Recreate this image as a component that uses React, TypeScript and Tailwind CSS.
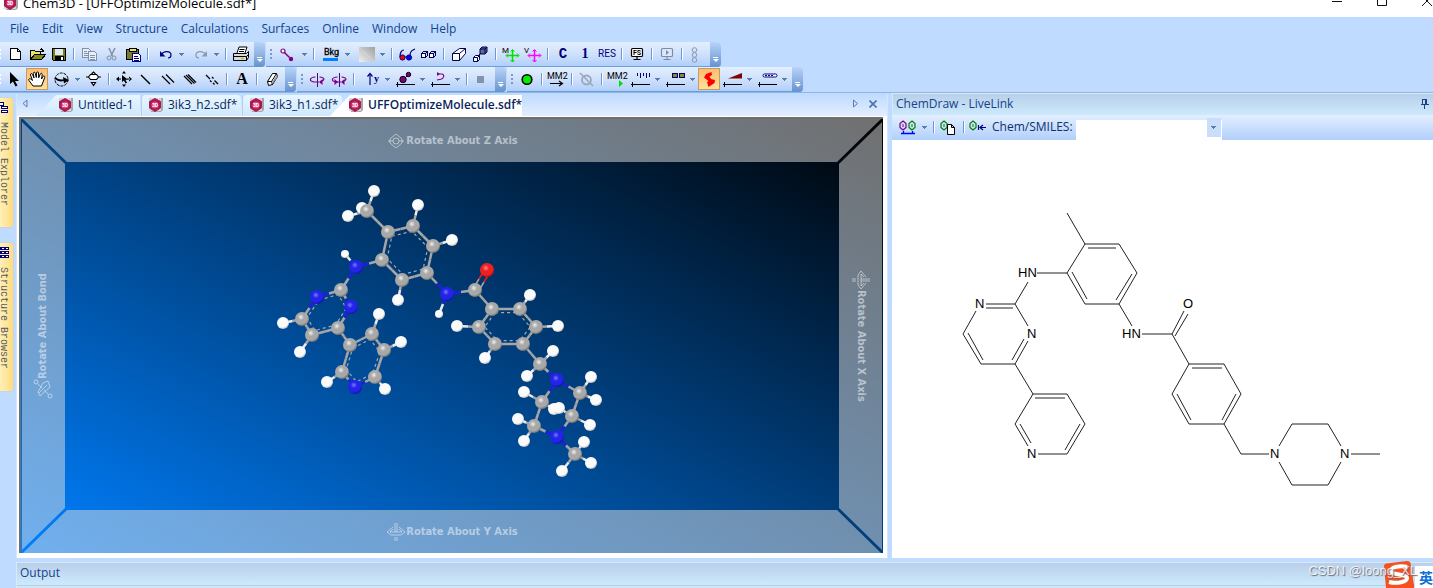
import React from 'react';
import clsx from 'clsx';

/* ---------- toolbar primitives ---------- */

interface IconProps {
  children: React.ReactNode;
  crisp?: boolean;
}

const Icon: React.FC<IconProps> = ({ children, crisp = false }) => (
  <svg width="22" height="22" viewBox="0 0 22 22" fill="none" shapeRendering={crisp ? 'crispEdges' : 'auto'} className="shrink-0">
    {children}
  </svg>
);

interface ToolProps {
  label: string;
  active?: boolean;
  children: React.ReactNode;
}

const Tool: React.FC<ToolProps> = ({ label, active = false, children }) => (
  <button
    aria-label={label}
    aria-pressed={active}
    className={clsx(
      'flex h-[22px] w-[22px] shrink-0 items-center justify-center',
      active && 'bg-gradient-to-b from-[#fdbb6c] to-[#ffe29a] outline outline-1 -outline-offset-1 outline-[#c29b6b]'
    )}
  >
    {children}
  </button>
);

const Arrow = () => (
  <svg width="5" height="3" viewBox="0 0 5 3" shapeRendering="crispEdges">
    <path d="M0 0h5v1h-1v1h-1v1h-1v-1h-1v-1h-1z" fill="#567db0" />
  </svg>
);

const SplitTool: React.FC<ToolProps> = ({ label, children }) => (
  <div className="flex h-[22px] w-[35px] shrink-0">
    <button aria-label={label} className="flex w-[23px] items-center justify-center">
      {children}
    </button>
    <button aria-label={`${label} options`} className="flex w-3 items-center justify-center">
      <Arrow />
    </button>
  </div>
);

const Sep = () => (
  <div className="flex w-2 shrink-0 justify-center">
    <div className="h-3 w-0.5 border-l border-r border-l-[#6a98d0] border-r-white" />
  </div>
);

const Grip = ({ clipped = false }: { clipped?: boolean }) => (
  <div className={clsx('flex shrink-0 flex-col gap-0.5', clipped ? 'w-1' : 'w-[9px] pl-1')}>
    {[0, 1, 2].map((i) => (
      <div key={i} className={clsx('h-0.5', clipped ? 'w-px bg-white' : 'w-0.5 bg-[#6f9dd9]')} />
    ))}
  </div>
);

const Bar: React.FC<{ label: string; clipped?: boolean; children: React.ReactNode }> = ({ label, clipped, children }) => (
  <div
    role="toolbar"
    aria-label={label}
    className="mr-px flex h-6 items-center rounded-r bg-gradient-to-b from-[#e3efff] via-[#cfe1fb] to-[#b1cffb] shadow-[0_1px_0_#6f9dd9]"
  >
    <Grip clipped={clipped} />
    {children}
    <button
      aria-label={`${label} overflow`}
      className="ml-0.5 flex h-[25px] w-[11px] shrink-0 flex-col items-center justify-end gap-px rounded-r bg-gradient-to-b from-[#b8d3f8] to-[#6593cf] pb-1"
    >
      <span className="h-px w-[5px] bg-white" />
      <svg width="6" height="4" viewBox="0 0 6 4">
        <path d="M0 0h6L3 3z" fill="#fff" />
      </svg>
    </button>
  </div>
);

/* ---------- icons ---------- */

const NewIcon = () => (
  <Icon crisp>
    <path d="M6.500 5.500h7l3 3v8h-10z" fill="#fff" stroke="#000" />
    <path d="M13.500 5.500v3h3" stroke="#000" />
  </Icon>
);

const OpenIcon = () => (
  <Icon crisp>
    <path d="M4.500 16.500v-9h4l1 1h5v3" fill="#e8e46a" stroke="#000" />
    <path d="M4.500 16.500l4-5h11l-4 5z" fill="#8a8a1a" stroke="#000" />
    <path d="M12 6h3v-1h1v1h1v1h1v2h-3v-1h1v-1z" fill="#000" />
  </Icon>
);

const SaveIcon = () => (
  <Icon crisp>
    <path d="M4.500 5.500h13v12h-12l-1-1z" fill="#7c7c12" stroke="#000" />
    <path d="M7 6h8v6H7z" fill="#dfeaf8" />
    <path d="M7 13h9v4H7z" fill="#000" />
    <path d="M13 14h2v3h-2z" fill="#fff" />
  </Icon>
);

const CopyIcon = () => (
  <Icon crisp>
    <path d="M4.500 5.500h6l2 2v7h-8z" fill="#e6effc" stroke="#8290a8" />
    <path d="M10.500 8.500h6l2 2v7h-8z" fill="#e6effc" stroke="#8290a8" />
    <path d="M6 8h3M6 10h4M6 12h4M12 12h5M12 14h5M12 16h5" stroke="#8290a8" />
  </Icon>
);

const CutIcon = () => (
  <Icon>
    <path d="M9 5l3.500 8M15 5l-4 8" stroke="#8290a8" strokeWidth="1.500" />
    <circle cx="9" cy="15" r="2" stroke="#8290a8" />
    <circle cx="14" cy="15" r="2" stroke="#8290a8" />
  </Icon>
);

const PasteIcon = () => (
  <Icon crisp>
    <path d="M4.500 6.500h12v10h-12z" fill="#7c7c3a" stroke="#000" />
    <path d="M7 5h7v3H7z" fill="#e8e46a" stroke="#000" />
    <path d="M10.500 10.500h6l2 2v6h-8z" fill="#fff" stroke="#000080" />
    <path d="M12 13h4M12 15h5M12 17h5" stroke="#000080" />
  </Icon>
);

const UndoIcon = () => (
  <Icon>
    <path d="M8 12c3-5 10-4 10 0 0 2-1 3-3 3" stroke="#000080" strokeWidth="1.200" />
    <path d="M7 8v5.500h5.500z" fill="#000080" />
  </Icon>
);

const RedoIcon = () => (
  <Icon>
    <path d="M18 12c-3-5-10-4-10 0 0 2 1 3 3 3" stroke="#8a99b3" strokeWidth="1.200" />
    <path d="M19 8v5.500h-5.500z" fill="#8a99b3" />
  </Icon>
);

const PrintIcon = () => (
  <Icon>
    <path d="M7 10l2-6h8l-2 6" fill="#fff" stroke="#000" />
    <path d="M9.500 6.500h5M9 8.500h5" stroke="#000" />
    <path d="M3.500 10.500h13l2-2v6l-2 3h-13z" fill="#d8d8d8" stroke="#000" />
    <path d="M3.500 13.500h13l2-2M16.500 13.500v4" stroke="#000" />
    <path d="M11 15.500h3" stroke="#c8c800" strokeWidth="1.500" />
  </Icon>
);

const BondToolIcon = () => (
  <Icon>
    <circle cx="7" cy="8" r="2" fill="#fff" stroke="#800080" strokeWidth="1.200" />
    <path d="M8.500 9.500l5 5" stroke="#800080" strokeWidth="1.500" />
    <circle cx="15" cy="16" r="2.200" fill="#800080" />
  </Icon>
);

const BackgroundIcon = () => (
  <Icon>
    <text x="5" y="12" fontSize="9" fontFamily="Roboto, sans-serif" fill="#000" stroke="#000" strokeWidth="0.300">Bkg</text>
    <path d="M4 15h15v3H4z" fill="#0080ff" />
  </Icon>
);

const FadeIcon = () => (
  <Icon crisp>
    <defs>
      <linearGradient id="fade" x1="1" y1="0" x2="0" y2="1">
        <stop offset="0" stopColor="#a0a0a0" />
        <stop offset="1" stopColor="#f0f0f0" />
      </linearGradient>
    </defs>
    <path d="M5 4h16v15H5z" fill="url(#fade)" />
    <path d="M5 4l16 15" stroke="#ccd3dd" />
  </Icon>
);

const GlassesIcon = () => (
  <Icon>
    <path d="M4 14C4 9 6 7 8 7M14 13c0-3 1-5 3-6l2-1" stroke="#000080" strokeWidth="1.200" />
    <path d="M8 14h4" stroke="#000080" />
    <circle cx="6.500" cy="14.500" r="2.600" fill="#f00" stroke="#000080" />
    <circle cx="13" cy="14.500" r="2.600" fill="#00f" stroke="#000080" />
  </Icon>
);

const StereoIcon = () => (
  <Icon crisp>
    {[3, 11].map((x) => (
      <g key={x} stroke="#000050">
        <path d={`M${x + 0.5} 10.500h4v4h-4z`} fill="#fff" />
        <path d={`M${x + 0.5} 10.500l2-2h4v4l-2 2M${x + 4.5} 10.500l2-2`} />
      </g>
    ))}
  </Icon>
);

const PerspectiveIcon = () => (
  <Icon>
    <path d="M4.500 10.500l7-5h6v5l-6 7h-7z" fill="#fff" stroke="#000050" />
    <path d="M4.500 10.500h7l6-5M11.500 10.500v7" stroke="#000050" />
  </Icon>
);

const DepthIcon = () => (
  <Icon>
    <path d="M10 6l2-2h5v5l-2 2h-5z" fill="#5a6a90" stroke="#000050" />
    <path d="M10 6h5v5M15 6l2-2" stroke="#000050" />
    <path d="M3.500 14.500l2-2h4v4l-2 2h-4z" fill="#fff" stroke="#000050" />
    <path d="M3.500 14.500h4v4M7.500 14.500l2-2M9 12l2-2" stroke="#000050" />
  </Icon>
);

const AxesIcon: React.FC<{ letter: string; color: string }> = ({ letter, color }) => (
  <Icon>
    <text x="2" y="10" fontSize="8" fontFamily="Roboto, sans-serif" fill="#000">{letter}</text>
    <path d="M12.500 7v12M6.500 12.500h12" stroke={color} strokeWidth="1.500" />
    <path d="M10.500 8.500l2-2 2 2M10.500 17l2 2 2-2M8 10.500l-2 2 2 2M17 10.500l2 2-2 2" stroke={color} />
  </Icon>
);

const ScreenIcon: React.FC<{ gray?: boolean }> = ({ gray = false }) => {
  const color = gray ? '#7c8ca8' : '#000';
  return (
    <Icon>
      <rect x="5.500" y="5.500" width="11" height="8" rx="1" fill={gray ? '#dbe8fb' : '#fff'} stroke={color} strokeWidth="1.200" />
      <path d="M11 14v2M7.500 16.500h7" stroke={color} strokeWidth="1.200" />
      {gray ? (
        <path d="M10 7v5l3-2.500z" fill={color} />
      ) : (
        <text x="7" y="12" fontSize="7" fontWeight="bold" fontFamily="Roboto, sans-serif" fill="#000">FS</text>
      )}
    </Icon>
  );
};

const ChainIcon = () => (
  <Icon>
    <circle cx="8.500" cy="7" r="2.300" stroke="#8a96ac" />
    <circle cx="8.500" cy="12" r="2.300" stroke="#8a96ac" />
    <circle cx="8.500" cy="17" r="2.300" stroke="#8a96ac" />
  </Icon>
);

const SelectIcon = () => (
  <Icon>
    <path d="M6 4v12l3-2.500 2.500 5 2-1-2.500-4.500h4z" fill="#000" />
  </Icon>
);

const HandIcon = () => (
  <Icon>
    <path
      d="M7 18l-4-5.500c-1-1.500.8-2.500 2-1.300l1.500 1.300L4.500 7c-.4-1.600 1.300-2 2-.6L8 10 7.300 5.500c0-1.700 1.700-1.700 2-.2L10.300 9.500l.2-4.500c.2-1.500 1.900-1.500 2 0l.2 4.800L14.300 6c.6-1.300 2.200-.8 1.900.7L15.500 11l1.500-2.500c.8-1.200 2.200-.3 1.700 1L17 14l-1.500 4z"
      fill="#fff"
      stroke="#000"
    />
  </Icon>
);

const TrackballIcon = () => (
  <Icon>
    <circle cx="12.500" cy="11.500" r="6.500" stroke="#000" strokeDasharray="3 1" />
    <path d="M6 10c3 2.500 6 3 9 2" stroke="#000" strokeWidth="1.800" />
    <path d="M14 9l6 3-5 3.500z" fill="#000" />
  </Icon>
);

const TranslateIcon = () => (
  <Icon>
    <path d="M7.500 6.500h6l2 2.500-2 2.500h-6L5.500 9zM3 9h2.500M15.500 9H18" fill="#fff" stroke="#000" strokeWidth="1.200" />
    <path d="M8.500 6l2-2 2 2M8.500 14.500h4l-2 3z" fill="#fff" stroke="#000" strokeWidth="1.200" />
  </Icon>
);

const MoveIcon = () => (
  <Icon>
    <path d="M9 7v7l2-1.500 1.500 3 1.500-.8-1.500-3H15z" fill="#000" />
    <path d="M11 3l2 2.500H9zM11 19l2-2.500H9zM3 11l3-2.500v5zM19 11l-3-2.500v5zM5 10.500h3v1H5zM14 10.500h3v1h-3z" fill="#000" />
  </Icon>
);

const BondIcon: React.FC<{ order: number }> = ({ order }) => (
  <Icon>
    {order === 1 && <path d="M6 7l9 9" stroke="#000" strokeWidth="1.400" />}
    {order >= 2 && <path d="M5 8l8 8M9 6.500l8 8" stroke="#000" strokeWidth="1.200" />}
    {order === 3 && <path d="M7 7l8.500 8.500" stroke="#000" strokeWidth="1.200" />}
  </Icon>
);

const DashedBondIcon = () => (
  <Icon>
    <path d="M5 7l4 4" stroke="#000" strokeWidth="1.300" />
    <path d="M9 12.500l1.500 1.500M12 15l1.500 1.500M11 9l1.500 1.500M13.500 12.500l3.500 3.500" stroke="#000" strokeWidth="1.300" />
  </Icon>
);

const EraserIcon = () => (
  <Icon>
    <path d="M6.500 13.500l5-8h4l1 3-5 8-4 1z" fill="#fff" stroke="#000" />
    <path d="M6.500 13.500h4l5-8M10.500 13.500l1 3" stroke="#000" />
    <path d="M11 14l5-7 .5 2-5 7z" fill="#999" />
  </Icon>
);

const SpinIcon: React.FC<{ both?: boolean }> = ({ both = false }) => (
  <Icon>
    <path d="M11.500 5v14" stroke="#500080" />
    <path d="M9.500 9C3 9.500 3 13 8 14h5M13.500 9c5.500.5 5.500 3 2 4" stroke="#800080" strokeWidth="1.200" />
    <path d="M13 14l3.500-3v6z" fill="#800080" />
    {both && <path d="M10 14l-3.500-3v6z" fill="#800080" />}
  </Icon>
);

const AxisYIcon = () => (
  <Icon>
    <path d="M11 6v11" stroke="#000080" strokeWidth="1.200" />
    <path d="M8.500 8.500L11 5.500l2.500 3" stroke="#000080" strokeWidth="1.200" />
    <text x="15" y="14" fontSize="10" fontWeight="bold" fontFamily="Liberation Serif, serif" fill="#000080">y</text>
  </Icon>
);

const Track = () => <path d="M2 16.500h19M3.500 14v5" stroke="#000" shapeRendering="crispEdges" />;

const FrameIcon = () => (
  <Icon>
    <path d="M9 12l4-4" stroke="#000" />
    <circle cx="9" cy="11.500" r="3.200" fill="#800080" stroke="#000" />
    <circle cx="14.500" cy="6.500" r="2.200" fill="#800080" stroke="#000" />
    <Track />
  </Icon>
);

const SwingIcon = () => (
  <Icon>
    <path d="M8 12l5-1M9 6h4c3 1 2 5-2 5.500" stroke="#800080" strokeWidth="1.100" />
    <path d="M8 4v4l3-2z" fill="#800080" />
    <Track />
  </Icon>
);

const RunIcon = () => (
  <Icon>
    <circle cx="11" cy="11.500" r="4.800" fill="#00f000" stroke="#000" strokeWidth="1.600" />
  </Icon>
);

const Mm2Icon: React.FC<{ run?: boolean }> = ({ run = false }) => (
  <Icon>
    <text x="1" y="11" fontSize="9" fontFamily="Roboto, sans-serif" fill="#000">MM2</text>
    {run ? (
      <path d="M13 12v7l4-3.500z" fill="#00e000" />
    ) : (
      <path d="M4 15.500h12M13 13l3.500 2.500-3.500 2.500" stroke="#000" strokeWidth="1.200" />
    )}
  </Icon>
);

const StopCalcIcon = () => (
  <Icon>
    <circle cx="10.500" cy="12" r="4.500" stroke="#9aa7bc" strokeWidth="1.800" />
    <path d="M4 5l13 13" stroke="#9aa7bc" strokeWidth="1.600" />
  </Icon>
);

const TicksIcon = () => (
  <Icon crisp>
    <path d="M8.500 5v3M11.500 5v5M14.500 5v3M17.500 5v5M20.500 5v4" stroke="#000080" />
    <Track />
  </Icon>
);

const FramesIcon = () => (
  <Icon crisp>
    <path d="M8.500 5.500h5v4h-5zM15.500 5.500h5v4h-5z" fill="#8a8a20" stroke="#000080" />
    <Track />
  </Icon>
);

const LightningIcon = () => (
  <Icon>
    <path d="M13.500 4L8 6 6 9.500l4.500 3.500L9 14l1.500 5 6-4 .5-3-4-1-1.500-2.500L14 7z" fill="#f00" />
  </Icon>
);

const WedgeIcon = () => (
  <Icon>
    <path d="M7 10.500L21 5v5.500z" fill="#800000" />
    <Track />
  </Icon>
);

const SliderIcon = () => (
  <Icon>
    <rect x="7" y="6" width="14" height="3" rx="1.500" fill="#fff" stroke="#000080" />
    <path d="M9 7.500h9" stroke="#000080" strokeDasharray="2 1" />
    <Track />
  </Icon>
);

const HexRing: React.FC<{ x: number; color: string }> = ({ x, color }) => (
  <g stroke={color}>
    <path d={`M${x} 5l3 2.500v4l-3 2.500-3-2.500v-4z`} strokeWidth="1.200" />
    <path d={`M${x} 8v3`} />
  </g>
);

const TextIcon: React.FC<{ text: string; className: string }> = ({ text, className }) => (
  <span className={clsx('leading-none', className)}>{text}</span>
);

const AppIcon = () => (
  <svg width="16" height="16" viewBox="0 0 16 16" className="shrink-0">
    <path d="M3 2l2-1h10v12l-2 2H3z" fill="#a7a7a7" />
    <path d="M1 1h12v13H1z" fill="#d8d4d8" />
    <path d="M7 1.500l5.500 3v6.500L7 14.500l-5.500-3.500V4.500z" fill="#b3154f" stroke="#9c2058" />
    <circle cx="7" cy="8" r="3.500" fill="#d94a85" />
    <text x="4" y="10" fontSize="5" fontWeight="bold" fontFamily="Roboto, sans-serif" fill="#fff">3D</text>
  </svg>
);

/* ---------- 3D model ---------- */

type Element = 'C' | 'N' | 'O' | 'H' | 'h';
type Atom = [Element, number, number];

const atoms: Record<string, Atom> = {
  ha3: ['H', 362, 208], me: ['C', 367, 211], ha1: ['H', 374, 191], ha2: ['H', 348, 216],
  a1: ['C', 388, 232], a2: ['C', 413, 226], a3: ['C', 433, 246], a4: ['C', 427, 273], a5: ['C', 402, 280], a6: ['C', 382, 260],
  hb1: ['H', 418, 205], hb2: ['H', 452, 240], hb3: ['H', 398, 300],
  n1: ['N', 356, 267], hn1: ['h', 345, 254],
  p2: ['C', 341, 290], p1: ['N', 317, 297], p6: ['C', 302, 319], p5: ['C', 312, 335], p4: ['C', 338, 328], p3: ['N', 351, 307],
  hp6: ['H', 283, 323], hp5: ['H', 300, 352],
  q1: ['C', 350, 345], q2: ['C', 372, 334], q3: ['C', 384, 350], q4: ['C', 375, 377], q5: ['N', 355, 387], q6: ['C', 342, 372],
  hq2: ['H', 379, 314], hq3: ['H', 401, 342], hq4: ['H', 385, 389], hq6: ['H', 327, 382],
  n2: ['N', 447, 294], hn2: ['h', 439, 314],
  co: ['C', 475, 290], o: ['O', 487, 270],
  b1: ['C', 492, 309], b2: ['C', 520, 309], b3: ['C', 536, 327], b4: ['C', 523, 344], b5: ['C', 495, 344], b6: ['C', 479, 327],
  hb7: ['H', 530, 295], hb8: ['H', 558, 326], hb9: ['H', 457, 326], hb10: ['H', 485, 358],
  ch: ['C', 540, 364], hc1: ['H', 553, 351], hc2: ['H', 527, 376],
  n3: ['N', 557, 380],
  hr42: ['H', 554, 409],
  r1: ['C', 580, 393], hr11: ['H', 591, 377], hr12: ['H', 596, 400],
  r2: ['C', 572, 416], hr21: ['H', 559, 408], hr22: ['H', 590, 425],
  n4: ['N', 557, 437],
  r3: ['C', 534, 426], hr31: ['H', 518, 419], hr32: ['H', 524, 441],
  r4: ['C', 542, 402], hr41: ['H', 524, 392],
  mn: ['C', 575, 454], hm1: ['H', 584, 442], hm2: ['H', 591, 463], hm3: ['H', 562, 471],
};

const bonds: [string, string][] = [
  ['me', 'ha1'], ['me', 'ha2'], ['me', 'a1'],
  ['a1', 'a2'], ['a2', 'a3'], ['a3', 'a4'], ['a4', 'a5'], ['a5', 'a6'], ['a6', 'a1'],
  ['a2', 'hb1'], ['a3', 'hb2'], ['a5', 'hb3'], ['a6', 'n1'], ['n1', 'hn1'], ['n1', 'p2'],
  ['p1', 'p2'], ['p1', 'p6'], ['p6', 'p5'], ['p5', 'p4'], ['p4', 'p3'], ['p3', 'p2'],
  ['p6', 'hp6'], ['p5', 'hp5'], ['p4', 'q1'],
  ['q1', 'q2'], ['q2', 'q3'], ['q3', 'q4'], ['q4', 'q5'], ['q5', 'q6'], ['q6', 'q1'],
  ['q2', 'hq2'], ['q3', 'hq3'], ['q4', 'hq4'], ['q6', 'hq6'],
  ['a4', 'n2'], ['n2', 'hn2'], ['n2', 'co'], ['co', 'b1'],
  ['b1', 'b2'], ['b2', 'b3'], ['b3', 'b4'], ['b4', 'b5'], ['b5', 'b6'], ['b6', 'b1'],
  ['b2', 'hb7'], ['b3', 'hb8'], ['b6', 'hb9'], ['b5', 'hb10'],
  ['b4', 'ch'], ['ch', 'hc1'], ['ch', 'hc2'], ['ch', 'n3'],
  ['n3', 'r1'], ['r1', 'r2'], ['r2', 'n4'], ['n4', 'r3'], ['r3', 'r4'], ['r4', 'n3'],
  ['r1', 'hr11'], ['r1', 'hr12'], ['r2', 'hr21'], ['r2', 'hr22'],
  ['r3', 'hr31'], ['r3', 'hr32'], ['r4', 'hr41'], ['r4', 'hr42'],
  ['n4', 'mn'], ['mn', 'hm1'], ['mn', 'hm2'], ['mn', 'hm3'],
];

const rings = [
  ['a1', 'a2', 'a3', 'a4', 'a5', 'a6'],
  ['p1', 'p2', 'p3', 'p4', 'p5', 'p6'],
  ['q1', 'q2', 'q3', 'q4', 'q5', 'q6'],
  ['b1', 'b2', 'b3', 'b4', 'b5', 'b6'],
];

const bondColor: Record<Element, string> = { C: '#a6a6a6', N: '#1e1ee0', O: '#e62020', H: '#ececec', h: '#ececec' };
const radius: Record<Element, number> = { C: 7, N: 7, O: 7, H: 6, h: 4 };
const shades: [string, string, string, string][] = [
  ['C', '#f0f0f0', '#a8a8a8', '#6e6e6e'],
  ['N', '#7a7aff', '#2424e8', '#1212a8'],
  ['O', '#ff8a8a', '#f02020', '#b01010'],
  ['H', '#ffffff', '#fafafa', '#b4b4b4'],
];

const innerRing = (ids: string[]) => {
  const pts = ids.map((id) => [atoms[id][1], atoms[id][2]]);
  const cx = pts.reduce((s, p) => s + p[0], 0) / pts.length;
  const cy = pts.reduce((s, p) => s + p[1], 0) / pts.length;
  return pts.map(([x, y]) => `${cx + (x - cx) * 0.8},${cy + (y - cy) * 0.8}`).join(' ');
};

const Model3D = () => (
  <svg viewBox="65 162 774 348" className="h-full w-full" role="img" aria-label="3D molecule">
    <defs>
      {shades.map(([name, hi, mid, low]) => (
        <radialGradient key={name} id={`atom-${name}`} cx="0.420" cy="0.360" r="0.650">
          <stop offset="0" stopColor={hi} />
          <stop offset="0.350" stopColor={mid} />
          <stop offset="0.750" stopColor={mid} />
          <stop offset="1" stopColor={low} />
        </radialGradient>
      ))}
    </defs>
    {bonds.map(([from, to]) => {
      const [e1, x1, y1] = atoms[from];
      const [e2, x2, y2] = atoms[to];
      const mx = (x1 + x2) / 2;
      const my = (y1 + y2) / 2;
      return (
        <g key={`${from}-${to}`} strokeWidth="2.500">
          <line x1={x1} y1={y1} x2={mx} y2={my} stroke={bondColor[e1]} />
          <line x1={mx} y1={my} x2={x2} y2={y2} stroke={bondColor[e2]} />
        </g>
      );
    })}
    <path d="M473 289l6-10M478 292l6-10" stroke="#a6a6a6" strokeWidth="1.500" />
    <path d="M479 279l6-10M484 282l6-10" stroke="#e62020" strokeWidth="1.500" />
    {rings.map((ids) => (
      <polygon key={ids[0]} points={innerRing(ids)} fill="none" stroke="#a8a8a8" strokeWidth="1.200" strokeDasharray="3 3" />
    ))}
    {Object.entries(atoms).map(([id, [el, x, y]]) => (
      <circle key={id} cx={x} cy={y} r={radius[el]} fill={`url(#atom-${el === 'h' ? 'H' : el})`} />
    ))}
  </svg>
);

/* ---------- 2D structure ---------- */

const structurePath = [
  'M1067 213L1085 244H1119L1137 273L1119 304H1085L1067 273L1085 244',
  'M1088 248H1116M1132 274L1116 300M1087 299L1072 272',
  'M1067 273H1037M1028 282L1015 304L1028 326M1015 304H986M1013 308H986',
  'M976 311L963 334L981 364H1015L1028 341M1012 360L1024 339M983 360L968 333',
  'M1015 364L1033 394H1067L1085 424L1067 454H1038M1035 398H1065M1080 424L1065 450',
  'M1033 394L1015 424L1028 446M1020 424L1031 443',
  'M1119 304L1132 326M1142 334H1172L1184 311M1175 336L1188 314M1172 334L1189 364',
  'M1189 364H1224L1241 394L1224 424H1189L1172 394ZM1192 368H1222M1236 394L1222 420M1191 420L1177 394',
  'M1224 424L1241 454H1269M1279 446L1292 424H1328L1341 446M1341 462L1328 485H1292L1279 462M1351 454H1380',
].join('');

const labels: [string, number, number][] = [
  ['HN', 1018, 277], ['N', 975, 308], ['N', 1027, 338], ['N', 1027, 458],
  ['HN', 1122, 338], ['O', 1183, 308], ['N', 1270, 458], ['N', 1340, 458],
];

const Structure2D = () => (
  <svg viewBox="892 140 541 418" className="h-full w-full" role="img" aria-label="Structure drawing">
    <path d={structurePath} fill="none" stroke="#222" />
    {labels.map(([text, x, y]) => (
      <text key={`${x}-${y}`} x={x} y={y} fontSize="13" fontFamily="Liberation Sans, Arial, sans-serif" fill="#000">
        {text}
      </text>
    ))}
  </svg>
);

/* ---------- panels ---------- */

const OrbitIcon: React.FC<{ kind: 'x' | 'y' | 'z' | 'bond' }> = ({ kind }) => (
  <svg width="20" height="20" viewBox="0 0 20 20" fill="none" stroke="currentColor" className="shrink-0">
    {kind === 'z' && (
      <>
        <path d="M10 3l6 5v4l-6 5-6-5V8zM2 10h5M13 10h5" />
        <circle cx="10" cy="10" r="3" />
      </>
    )}
    {kind === 'y' && <path d="M9 1v9M11 1v9M9 15v4M11 15v4M7 5l-6 5 4 3h10l4-3-6-5M4 10h12M7 7l-3 3M13 7l3 3" />}
    {kind === 'x' && <path d="M19 9h-9M19 11h-9M5 9H1M5 11H1M15 7l-5-6-3 4v10l3 4 5-6M10 4v12M13 7l-3-3M13 13l-3 3" />}
    {kind === 'bond' && (
      <>
        <path d="M5 5l4 4M11 11l4 4M3 12l10-9 2 4-5 9-5 2zM6 14l8-8" />
        <circle cx="3" cy="3" r="2" />
        <circle cx="17" cy="17" r="2" />
      </>
    )}
  </svg>
);

const axisText = 'font-[DejaVu_Sans_Condensed,DejaVu_Sans,sans-serif] text-[11px] font-bold leading-4 whitespace-nowrap';
const axisBase = 'flex items-center justify-center bg-[#e0e0e0]/50 text-[#e8eef4]/60';

const Viewport = () => (
  <div className="grid min-h-0 flex-1 grid-cols-[44px_1fr_44px] grid-rows-[43px_1fr_43px] border-t-2 border-l-2 border-[#6f6f6f] bg-linear-to-tr/srgb from-[#0080ff] to-black">
    <div className={clsx(axisBase, 'col-span-3 col-start-1 row-start-1 [clip-path:polygon(2px_0,calc(100%-2px)_0,calc(100%-46px)_100%,46px_100%)]')}>
      <OrbitIcon kind="z" />
      <span className={axisText}>Rotate About Z Axis</span>
    </div>
    <div className={clsx(axisBase, 'col-start-1 row-span-3 row-start-1 rotate-180 [writing-mode:vertical-rl] [clip-path:polygon(calc(100%-1px)_3px,calc(100%-1px)_calc(100%-3px),0_calc(100%-45px),0_45px)]')}>
      <OrbitIcon kind="bond" />
      <span className={axisText}>Rotate About Bond</span>
    </div>
    <div className="col-start-2 row-start-2 min-h-0 min-w-0">
      <Model3D />
    </div>
    <div className={clsx(axisBase, 'col-start-3 row-span-3 row-start-1 [writing-mode:vertical-rl] [clip-path:polygon(calc(100%-1px)_3px,calc(100%-1px)_calc(100%-3px),0_calc(100%-45px),0_45px)]')}>
      <OrbitIcon kind="x" />
      <span className={axisText}>Rotate About X Axis</span>
    </div>
    <div className={clsx(axisBase, 'col-span-3 col-start-1 row-start-3 [clip-path:polygon(46px_0,calc(100%-46px)_0,calc(100%-2px)_100%,2px_100%)]')}>
      <OrbitIcon kind="y" />
      <span className={axisText}>Rotate About Y Axis</span>
    </div>
  </div>
);

const SideTab: React.FC<{ label: string; icon: React.ReactNode; className: string }> = ({ label, icon, className }) => (
  <button
    className={clsx(
      'flex w-3.5 flex-col items-end rounded-r-sm border-y border-r border-[#c8d4e0] bg-gradient-to-r from-[#fff0b8] to-[#ffdc7c] pt-1',
      className
    )}
  >
    <svg width="12" height="12" viewBox="0 0 12 12" fill="#fff" stroke="#000080" shapeRendering="crispEdges" className="mr-1 shrink-0">
      {icon}
    </svg>
    <span className="mt-2 mr-1 font-[Liberation_Mono,monospace] text-[10px] leading-3 whitespace-nowrap text-[#54585f] [writing-mode:vertical-rl]">
      {label}
    </span>
  </button>
);

const menus = ['File', 'Edit', 'View', 'Structure', 'Calculations', 'Surfaces', 'Online', 'Window', 'Help'];

const tabBase = 'flex h-[21px] shrink-0 items-center gap-1 pb-0.5 whitespace-nowrap';

const DocumentTabs = () => (
  <div className="flex h-[22px] shrink-0 items-end bg-gradient-to-b from-[#bfdbff] to-[#e3eeff] pr-2.5 text-xs text-[#0b1f5c]">
    <button aria-label="Scroll tabs left" className="flex h-[21px] w-[19px] shrink-0 items-center pb-1 pl-[5px]">
      <svg width="6" height="9" viewBox="0 0 6 9" fill="none" stroke="#567db0">
        <path d="M5 1v7L1 4.500z" />
      </svg>
    </button>
    <button className={clsx(tabBase, 'w-[104px] bg-gradient-to-b from-[#e8f6ff] to-[#cfe8fd] pl-[22px] [clip-path:polygon(20px_0,100%_0,100%_100%,0_100%)]')}>
      <AppIcon />
      Untitled-1
    </button>
    <button className={clsx(tabBase, 'ml-px w-[100px] rounded-t border-l border-[#b4cfee] bg-gradient-to-b from-[#e8f6ff] to-[#cfe8fd] pl-1.5')}>
      <AppIcon />
      3ik3_h2.sdf*
    </button>
    <button className={clsx(tabBase, 'ml-px w-[100px] rounded-t border-l border-[#b4cfee] bg-gradient-to-b from-[#e8f6ff] to-[#cfe8fd] pl-1.5')}>
      <AppIcon />
      3ik3_h1.sdf*
    </button>
    <button className={clsx(tabBase, '-ml-3 w-48 bg-white pl-[18px] font-semibold [clip-path:polygon(20px_0,100%_0,100%_100%,0_100%)]')}>
      <AppIcon />
      UFFOptimizeMolecule.sdf*
    </button>
    <div className="ml-auto flex h-[21px] items-center gap-2.5 pb-1">
      <button aria-label="Scroll tabs right">
        <svg width="7" height="9" viewBox="0 0 7 9" fill="none" stroke="#567db0">
          <path d="M1.500 1v7l4-3.500z" />
        </svg>
      </button>
      <button aria-label="Close document">
        <svg width="8" height="8" viewBox="0 0 8 8" fill="none" stroke="#4a72a8" strokeWidth="1.600">
          <path d="M0.500 0.500l7 7M7.500 0.500l-7 7" />
        </svg>
      </button>
    </div>
  </div>
);

const LiveLinkPanel = () => (
  <section className="flex w-[541px] shrink-0 flex-col">
    <header className="flex h-[22px] shrink-0 items-center justify-between border-t border-l border-[#dbe8f6] bg-gradient-to-b from-[#b8cfe9] to-[#cdeafd] pr-1 pb-0.5 pl-[3px] text-xs text-[#15428b]">
      <h2>ChemDraw - LiveLink</h2>
      <button aria-label="Pin panel">
        <svg width="9" height="10" viewBox="0 0 9 10" fill="none" stroke="#15428b" shapeRendering="crispEdges">
          <path d="M2.500 0.500h4v5h-4zM0.500 5.500h8M4.500 6v4M5.500 1v5" />
        </svg>
      </button>
    </header>
    <div className="flex h-[25px] shrink-0 items-center bg-gradient-to-b from-[#e3efff] to-[#b1cffb] pb-px pl-[3px]">
      <SplitTool label="Link mode">
        <Icon>
          <HexRing x={7} color="#800080" />
          <HexRing x={16} color="#008000" />
          <path d="M7.500 15v2.500h9V15M5 17.500h5M14 17.500h5" stroke="#00f" strokeWidth="1.300" />
        </Icon>
      </SplitTool>
      <Sep />
      <Tool label="Copy drawing">
        <Icon>
          <HexRing x={6} color="#008000" />
          <path d="M9.500 8.500h4l3 3v7h-7zM13.500 8.500v3h3" fill="#fff" stroke="#000" />
        </Icon>
      </Tool>
      <Sep />
      <Tool label="Insert drawing">
        <Icon>
          <HexRing x={5} color="#008000" />
          <path d="M10.500 9v5M12 11.500h6M15 9l-3 2.500 3 2.500" stroke="#000080" strokeWidth="1.200" />
        </Icon>
      </Tool>
      <label htmlFor="smiles" className="ml-0.5 pb-px text-xs text-[#10306e]">
        Chem/SMILES:
      </label>
      <div className="relative ml-[3px] h-[21px] w-[146px]">
        <select id="smiles" className="h-full w-full appearance-none border border-white bg-white text-xs" />
        <div className="pointer-events-none absolute inset-y-px right-px flex w-3.5 items-center justify-center bg-[#c9defa]">
          <Arrow />
        </div>
      </div>
    </div>
    <div className="min-h-0 flex-1 bg-white">
      <Structure2D />
    </div>
  </section>
);

const App: React.FC = () => (
  <div className="relative flex h-screen flex-col overflow-hidden bg-[#bfdbff] font-[Open_Sans,Noto_Sans,sans-serif]">
    <header className="flex h-[17px] shrink-0 items-start justify-between overflow-hidden bg-white">
      <div className="-mt-[7px] flex items-center gap-1 pl-[3px]">
        <AppIcon />
        <h1 className="text-[13px] leading-5 text-black">Chem3D - [UFFOptimizeMolecule.sdf*]</h1>
      </div>
      <div className="-mt-1 flex gap-[34px]">
        {['M0 5.500h10', 'M0.500 0.500h9v9h-9z', 'M0 0l10 10M10 0l-10 10'].map((d, i) => (
          <button key={d} aria-label={['Minimize', 'Maximize', 'Close'][i]}>
            <svg width="11" height="11" viewBox="0 0 11 11" fill="none" stroke="#111">
              <path d={d} />
            </svg>
          </button>
        ))}
      </div>
    </header>

    <nav className="flex h-[25px] shrink-0 items-center gap-px pb-px pl-1 text-xs text-[#15428b]">
      {menus.map((menu) => (
        <button key={menu} className="px-1.5">
          {menu}
        </button>
      ))}
    </nav>

    <div className="flex h-[25px] shrink-0 items-start">
      <Bar label="Standard" clipped>
        <Tool label="New"><NewIcon /></Tool>
        <Tool label="Open"><OpenIcon /></Tool>
        <Tool label="Save"><SaveIcon /></Tool>
        <Sep />
        <Tool label="Copy"><CopyIcon /></Tool>
        <Tool label="Cut"><CutIcon /></Tool>
        <Tool label="Paste"><PasteIcon /></Tool>
        <Sep />
        <SplitTool label="Undo"><UndoIcon /></SplitTool>
        <SplitTool label="Redo"><RedoIcon /></SplitTool>
        <Sep />
        <Tool label="Print"><PrintIcon /></Tool>
      </Bar>
      <Bar label="Display">
        <SplitTool label="Display mode"><BondToolIcon /></SplitTool>
        <Sep />
        <SplitTool label="Background color"><BackgroundIcon /></SplitTool>
        <SplitTool label="Background effects"><FadeIcon /></SplitTool>
        <Sep />
        <Tool label="Red and blue"><GlassesIcon /></Tool>
        <Tool label="Stereo pairs"><StereoIcon /></Tool>
        <Sep />
        <Tool label="Perspective"><PerspectiveIcon /></Tool>
        <Tool label="Depth fading"><DepthIcon /></Tool>
        <Sep />
        <Tool label="Model axes"><AxesIcon letter="M" color="#00e000" /></Tool>
        <Tool label="View axes"><AxesIcon letter="V" color="#ff00ff" /></Tool>
        <Sep />
        <Tool label="Element symbols"><TextIcon text="C" className="font-[Liberation_Mono,monospace] text-sm font-bold text-[#000080]" /></Tool>
        <Tool label="Serial numbers"><TextIcon text="1" className="font-[Liberation_Serif,serif] text-sm font-bold text-[#000080]" /></Tool>
        <Tool label="Residues"><TextIcon text="RES" className="font-[Roboto,sans-serif] text-[10px] text-[#000080]" /></Tool>
        <Sep />
        <Tool label="Full screen"><ScreenIcon /></Tool>
        <Sep />
        <Tool label="Presentation"><ScreenIcon gray /></Tool>
        <Sep />
        <Tool label="Chain"><ChainIcon /></Tool>
      </Bar>
    </div>

    <div className="flex h-[25px] shrink-0 items-start">
      <Bar label="Building" clipped>
        <Tool label="Select"><SelectIcon /></Tool>
        <Tool label="Hand" active><HandIcon /></Tool>
        <SplitTool label="Trackball"><TrackballIcon /></SplitTool>
        <Tool label="Zoom"><TranslateIcon /></Tool>
        <Sep />
        <Tool label="Move"><MoveIcon /></Tool>
        <Tool label="Single bond"><BondIcon order={1} /></Tool>
        <Tool label="Double bond"><BondIcon order={2} /></Tool>
        <Tool label="Triple bond"><BondIcon order={3} /></Tool>
        <Tool label="Uncoordinated bond"><DashedBondIcon /></Tool>
        <Sep />
        <Tool label="Text"><TextIcon text="A" className="font-[Liberation_Serif,serif] text-base font-bold text-black" /></Tool>
        <Sep />
        <Tool label="Eraser"><EraserIcon /></Tool>
      </Bar>
      <Bar label="Demo">
        <Tool label="Spin"><SpinIcon /></Tool>
        <Tool label="Rock"><SpinIcon both /></Tool>
        <Sep />
        <SplitTool label="Axis"><AxisYIcon /></SplitTool>
        <SplitTool label="Speed"><FrameIcon /></SplitTool>
        <SplitTool label="Amplitude"><SwingIcon /></SplitTool>
        <Sep />
        <Tool label="Stop">
          <Icon crisp><path d="M6 8h7v7H6z" fill="#8493ab" /></Icon>
        </Tool>
      </Bar>
      <Bar label="Calculation">
        <Tool label="Run"><RunIcon /></Tool>
        <Sep />
        <Tool label="MM2 minimize"><Mm2Icon /></Tool>
        <Sep />
        <Tool label="Stop calculation"><StopCalcIcon /></Tool>
        <Sep />
        <Tool label="MM2 dynamics"><Mm2Icon run /></Tool>
        <SplitTool label="Step interval"><TicksIcon /></SplitTool>
        <SplitTool label="Frame interval"><FramesIcon /></SplitTool>
        <Tool label="Heating" active><LightningIcon /></Tool>
        <SplitTool label="Heating rate"><WedgeIcon /></SplitTool>
        <SplitTool label="Temperature"><SliderIcon /></SplitTool>
      </Bar>
    </div>

    <main className="flex min-h-0 flex-1 gap-1 border-t border-[#8fb5e3]">
      <div className="flex min-w-0 flex-1">
        <aside className="flex w-4 shrink-0 flex-col gap-3.5 pt-1">
          <SideTab
            label="Model Explorer"
            className="h-[131px]"
            icon={<path d="M0.500 0.500h6v3h-6zM4.500 4.500h6v2h-6zM4.500 8.500h6v2h-6z" />}
          />
          <SideTab
            label="Structure Browser"
            className="h-[150px]"
            icon={<path d="M0.500 0.500h3v2h-3zM4.500 0.500h3v2h-3zM0.500 4.500h3v2h-3zM4.500 4.500h3v2h-3zM0.500 8.500h3v2h-3zM4.500 8.500h3v2h-3zM8.500 0.500h3v2h-3zM8.500 4.500h3v2h-3zM8.500 8.500h3v2h-3z" />}
          />
        </aside>
        <div className="mt-px flex min-w-0 flex-1 flex-col border-x border-[#d5e5fa]">
          <DocumentTabs />
          <div className="flex min-h-0 flex-1 flex-col bg-white pt-px pr-1 pb-[5px] pl-0.5">
            <Viewport />
          </div>
        </div>
      </div>
      <LiveLinkPanel />
    </main>

    <footer className="mt-1 ml-4 flex h-[26px] shrink-0 flex-col border-t border-l border-[#dbe8f6] bg-[#d3e6f7]">
      <h2 className="h-[23px] border-b border-[#b4cfe8] bg-gradient-to-b from-[#b8cfe9] to-[#cdeafd] pl-[3px] text-xs leading-5 text-[#15428b]">
        Output
      </h2>
    </footer>

    {/* input method badge floats over the status strip */}
    <div className="absolute right-0 bottom-0 flex items-end">
      <svg width="34" height="27" viewBox="0 0 34 27">
        <path d="M3 5q0-2 2-2.500L26 0q3 0 3.500 2L33 24v3H5z" fill="#f4511e" />
        <path d="M26 6C19 4 10 6 10 10s16 3 16 7-10 6-18 4" fill="none" stroke="#fff" strokeWidth="4" />
      </svg>
      <div className="flex h-[22px] w-[18px] items-center justify-end bg-white">
        <span className="font-[Noto_Sans_CJK_SC,sans-serif] text-sm leading-none font-bold text-[#0a6fd6]">英</span>
      </div>
    </div>
    <span className="absolute right-4 bottom-[7px] font-[Liberation_Sans,Arial,sans-serif] text-[13px] leading-5 text-white/80 [text-shadow:1px_1px_1px_#667]">
      CSDN @loong_XL
    </span>
  </div>
);

export default App;
